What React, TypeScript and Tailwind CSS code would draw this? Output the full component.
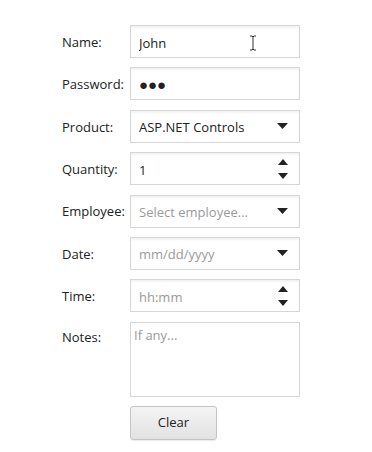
import React from "react";

const font = { fontFamily: '"Open Sans", "Noto Sans", Arial, sans-serif' };

function Caret() {
  return (
    <svg width="11" height="6" viewBox="0 0 11 6" className="shrink-0">
      <path d="M0 0h11L5.5 6z" fill="#222" />
    </svg>
  );
}

function Spinner() {
  return (
    <div className="flex flex-col items-center gap-[8px]">
      <svg width="10" height="6" viewBox="0 0 10 6">
        <path d="M0 6h10L5 0z" fill="#222" />
      </svg>
      <svg width="10" height="6" viewBox="0 0 10 6">
        <path d="M0 0h10L5 6z" fill="#222" />
      </svg>
    </div>
  );
}

function Box({
  children,
  right,
  className = "",
}: {
  children?: React.ReactNode;
  right?: React.ReactNode;
  className?: string;
}) {
  return (
    <div
      className={`relative flex w-[170px] items-center justify-between border border-[#d6d6d6] bg-white pl-[8px] pr-[11px] shadow-[inset_0_2px_2px_rgba(0,0,0,0.05)] ${className}`}
    >
      <div className="min-w-0 flex-1 truncate">{children}</div>
      {right}
    </div>
  );
}

function Row({ label, children, top = false }: { label: string; children: React.ReactNode; top?: boolean }) {
  return (
    <div className={`flex ${top ? "items-start" : "items-center"}`}>
      <div className={`w-[68px] text-[13px] text-[#222] ${top ? "pt-[6px]" : "pt-[2px]"}`}>{label}</div>
      {children}
    </div>
  );
}

export default function App() {
  return (
    <div className="min-h-[452px] w-[372px] bg-white" style={font}>
      <div className="flex flex-col gap-[9.4px] pl-[62px] pt-[25px]">
        <Row label="Name:">
          <Box className="h-[33px]">
            <span className="text-[13px] text-[#222]">John</span>
            <svg width="8" height="16" viewBox="0 0 8 16" className="absolute left-[118px] top-[9px]">
              <path d="M1 1h2l1 1 1-1h2M4 2v12M1 15h2l1-1 1 1h2" stroke="#333" strokeWidth="1" fill="none" />
            </svg>
          </Box>
        </Row>
        <Row label="Password:">
          <Box className="h-[33px]">
            <span className="text-[15px] leading-none tracking-[0px] text-[#222]">●●●</span>
          </Box>
        </Row>
        <Row label="Product:">
          <Box className="h-[33px]" right={<Caret />}>
            <span className="text-[13px] text-[#222]">ASP.NET Controls</span>
          </Box>
        </Row>
        <Row label="Quantity:">
          <Box className="h-[33px]" right={<Spinner />}>
            <span className="text-[13px] text-[#222]">1</span>
          </Box>
        </Row>
        <Row label="Employee:">
          <Box className="h-[33px]" right={<Caret />}>
            <span className="text-[13px] text-[#9a9a9a]">Select employee...</span>
          </Box>
        </Row>
        <Row label="Date:">
          <Box className="h-[33px]" right={<Caret />}>
            <span className="text-[13px] text-[#9a9a9a]">mm/dd/yyyy</span>
          </Box>
        </Row>
        <Row label="Time:">
          <Box className="h-[33px]" right={<Spinner />}>
            <span className="text-[13px] text-[#9a9a9a]">hh:mm</span>
          </Box>
        </Row>
        <Row label="Notes:" top>
          <div className="h-[75px] w-[170px] border border-[#d6d6d6] bg-white pl-[3px] pt-[3px] text-[13px] text-[#9a9a9a]">
            If any...
          </div>
        </Row>
        <div className="pl-[68px]">
          <button className="h-[34px] w-[87px] rounded-[3px] border border-[#c4c4c4] bg-gradient-to-b from-[#f4f4f4] to-[#e2e2e2] text-[13px] text-[#222] shadow-[0_1px_1px_rgba(0,0,0,0.08)]">
            Clear
          </button>
        </div>
      </div>
    </div>
  );
}
